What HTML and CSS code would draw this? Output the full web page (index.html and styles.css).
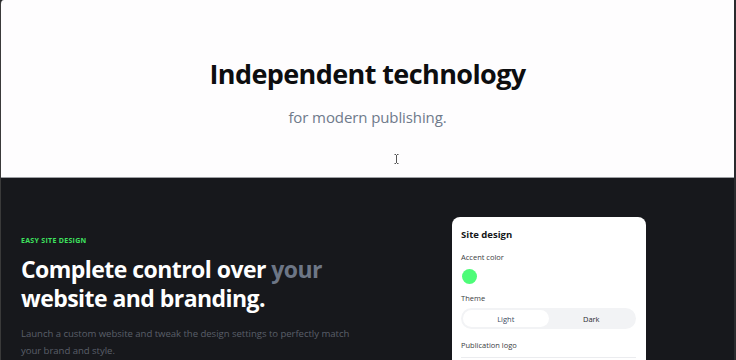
FILE: index.html
```html
<!DOCTYPE html>
<html>
<head>
<meta charset="utf-8">
<link rel="stylesheet" href="styles.css">
</head>
<body>
<div class="frame">
  <section class="hero">
    <h1 class="hero-title">Independent technology</h1>
    <p class="hero-sub">for modern publishing.</p>
    <svg class="cursor" width="5" height="10" viewBox="0 0 5 10"><path d="M0.5 0.5h1.5M3 0.5h1.5M2.5 1v8M0.5 9.5h1.5M3 9.5h1.5" stroke="#555" stroke-width="1" fill="none"/></svg>
  </section>
  <section class="feature">
    <div class="copy">
      <div class="eyebrow">EASY SITE DESIGN</div>
      <h2 class="feature-title">Complete control over <span class="muted">your</span> website and branding.</h2>
      <p class="feature-text">Launch a custom website and tweak the design settings to perfectly match your brand and style.</p>
    </div>
    <div class="card">
      <div class="card-title">Site design</div>
      <div class="label">Accent color</div>
      <div class="swatch"></div>
      <div class="label">Theme</div>
      <div class="segmented">
        <div class="seg active">Light</div>
        <div class="seg">Dark</div>
      </div>
      <div class="label logo-label">Publication logo</div>
    </div>
  </section>
</div>
</body>
</html>
```
FILE: styles.css
```css
* { box-sizing: border-box; }
html, body { margin: 0; padding: 0; }
body {
  width: 736px;
  height: 360px;
  overflow: hidden;
  background: #2a2b2e;
  font-family: "Open Sans", "Noto Sans", sans-serif;
}
.frame {
  width: 734px;
  height: 360px;
  border-left: 1px solid #3a3a3a;
  background: #17181c;
  border-top-left-radius: 4px;
  overflow: hidden;
}
.hero {
  height: 178px;
  background: #fefdfe;
  border-bottom: 1px solid #9ea0a4;
  display: flex;
  flex-direction: column;
  align-items: center;
  padding-top: 56px;
}
.hero-title {
  margin: 0;
  font-size: 27px;
  font-weight: 700;
  color: #0d0d0f;
  letter-spacing: -0.6px;
  line-height: 36px;
}
.hero-sub {
  margin: 15px 0 0;
  font-size: 15px;
  color: #6f7a8b;
  line-height: 20px;
  letter-spacing: -0.1px;
}
.cursor {
  margin-top: 27px;
  margin-left: 58px;
}
.feature {
  display: flex;
  justify-content: space-between;
  padding: 39px 88px 0 20px;
}
.copy {
  width: 340px;
  padding-top: 19px;
}
.eyebrow {
  font-size: 7px;
  font-weight: 700;
  color: #3ee35f;
  letter-spacing: 0.3px;
  line-height: 10px;
}
.feature-title {
  margin: 9px 0 0;
  font-size: 23px;
  font-weight: 700;
  color: #ffffff;
  line-height: 29px;
  letter-spacing: -0.55px;
}
.muted { color: #6d7686; }
.feature-text {
  margin: 12px 0 0;
  font-size: 9.6px;
  line-height: 17px;
  color: #5a5f69;
  letter-spacing: -0.05px;
}
.card {
  width: 194px;
  height: 160px;
  background: #ffffff;
  border-radius: 8px;
  padding: 11px 10px 0 9px;
}
.card-title {
  font-size: 9.5px;
  font-weight: 700;
  color: #15171a;
  line-height: 14px;
}
.label {
  font-size: 7.5px;
  color: #3a3d42;
  line-height: 10px;
  margin-top: 10px;
}
.swatch {
  width: 15px;
  height: 15px;
  border-radius: 50%;
  background: #4dfc78;
  margin-top: 7px;
  margin-left: 1px;
}
.swatch + .label { margin-top: 9px; }
.segmented {
  margin-top: 5px;
  height: 21px;
  background: #f2f3f5;
  border-radius: 11px;
  display: flex;
  padding: 2px;
}
.seg {
  flex: 1;
  display: flex;
  align-items: center;
  justify-content: center;
  font-size: 7.5px;
  color: #2a2d32;
  border-radius: 9px;
}
.seg.active {
  background: #ffffff;
  color: #3c4a63;
}
.logo-label {
  margin-top: 11px;
  padding-bottom: 7px;
  border-bottom: 1px solid #ebecef;
}
```
